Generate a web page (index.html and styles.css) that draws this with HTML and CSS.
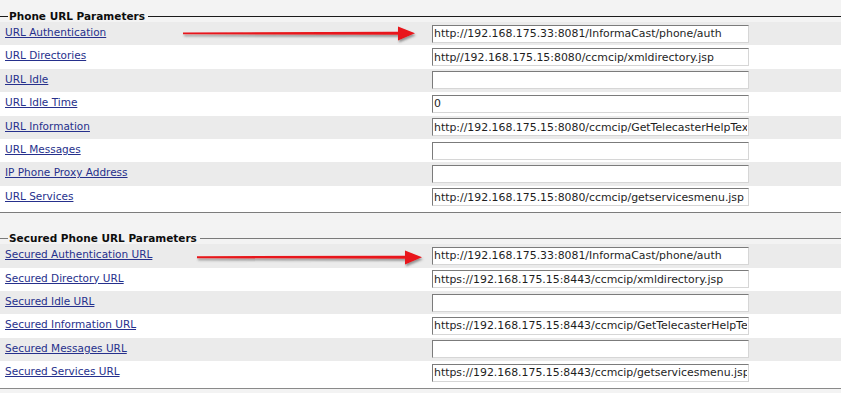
FILE: index.html
```html
<!DOCTYPE html>
<html>
<head>
<meta charset="utf-8">
<link rel="stylesheet" href="styles.css">
</head>
<body>
<div class="page">
  <section class="group first">
    <div class="legend"><span>Phone URL Parameters</span></div>
    <div class="rows">
      <div class="row"><a href="#">URL Authentication</a><input type="text" value="http://192.168.175.33:8081/InformaCast/phone/auth"></div>
      <div class="row"><a href="#">URL Directories</a><input type="text" value="http//192.168.175.15:8080/ccmcip/xmldirectory.jsp"></div>
      <div class="row"><a href="#">URL Idle</a><input type="text" value=""></div>
      <div class="row"><a href="#">URL Idle Time</a><input type="text" value="0"></div>
      <div class="row"><a href="#">URL Information</a><input type="text" value="http://192.168.175.15:8080/ccmcip/GetTelecasterHelpText.jsp"></div>
      <div class="row"><a href="#">URL Messages</a><input type="text" value=""></div>
      <div class="row"><a href="#">IP Phone Proxy Address</a><input type="text" value=""></div>
      <div class="row"><a href="#">URL Services</a><input type="text" value="http://192.168.175.15:8080/ccmcip/getservicesmenu.jsp"></div>
    </div>
  </section>
  <section class="group second">
    <div class="legend"><span>Secured Phone URL Parameters</span></div>
    <div class="rows">
      <div class="row"><a href="#">Secured Authentication URL</a><input type="text" value="http://192.168.175.33:8081/InformaCast/phone/auth"></div>
      <div class="row"><a href="#">Secured Directory URL</a><input type="text" value="https://192.168.175.15:8443/ccmcip/xmldirectory.jsp"></div>
      <div class="row"><a href="#">Secured Idle URL</a><input type="text" value=""></div>
      <div class="row"><a href="#">Secured Information URL</a><input type="text" value="https://192.168.175.15:8443/ccmcip/GetTelecasterHelpText.jsp"></div>
      <div class="row"><a href="#">Secured Messages URL</a><input type="text" value=""></div>
      <div class="row"><a href="#">Secured Services URL</a><input type="text" value="https://192.168.175.15:8443/ccmcip/getservicesmenu.jsp"></div>
    </div>
  </section>
  <svg class="arrows" width="841" height="393" viewBox="0 0 841 393">
    <defs>
      <filter id="sh" x="-10%" y="-100%" width="120%" height="400%">
        <feDropShadow dx="1" dy="2" stdDeviation="1.2" flood-color="#555" flood-opacity="0.6"/>
      </filter>
    </defs>
    <g filter="url(#sh)" fill="#e8141a">
      <polygon points="183,32.4 400,31.8 400,34.8 183,34.2"/>
      <polygon points="398,26.5 415,33.3 398,40.5"/>
      <polygon points="197,256.2 407,255.8 407,258.8 197,258.2"/>
      <polygon points="405,250.5 422,257.3 405,264.5"/>
    </g>
  </svg>
</div>
</body>
</html>
```
FILE: styles.css
```css
html, body {
  margin: 0;
  padding: 0;
}

body {
  background: #f3f3f3;
  font-family: "DejaVu Sans", Verdana, sans-serif;
}

.page {
  position: relative;
  width: 841px;
  height: 393px;
  overflow: hidden;
  padding-top: 10px;
  box-sizing: border-box;
}

.legend {
  display: flex;
  align-items: center;
  height: 12px;
  font-size: 10.5px;
  font-weight: bold;
  color: #0d0d0d;
}

.legend::before {
  content: "";
  width: 8px;
  border-top: 1px solid #1a1a1a;
}

.legend::after {
  content: "";
  flex: 1;
  border-top: 1px solid #1a1a1a;
}

.legend span {
  padding: 0 3px 0 1px;
  line-height: 12px;
}

.second {
  margin-top: 19px;
}

.second .legend::before,
.second .legend::after {
  border-top-color: #7a7a7a;
}

.rows {
  background: #fff;
  border-bottom: 1px solid #7c7c7c;
}

.first .rows {
  padding-bottom: 3px;
}

.second .rows {
  padding-bottom: 4px;
  border-bottom-color: #8a8a8a;
}

.row {
  display: grid;
  grid-template-columns: 432px 317px;
  align-items: center;
  height: 23.4px;
}

.row:nth-child(odd) {
  background: #ebebeb;
}

.row a {
  align-self: start;
  justify-self: start;
  margin-left: 5px;
  margin-top: 4px;
  font-size: 10.5px;
  line-height: 13px;
  color: #26308c;
  text-decoration: underline;
}

.row input {
  width: 317px;
  height: 18px;
  box-sizing: border-box;
  margin: 0;
  padding: 0 1px;
  border: 1px solid;
  border-color: #7b7b7b #d6d6d6 #d6d6d6 #7b7b7b;
  background: #fff;
  font-family: "DejaVu Sans", Verdana, sans-serif;
  font-size: 10.9px;
  color: #1e1e1e;
  outline: none;
}

.arrows {
  position: absolute;
  top: 0;
  left: 0;
  pointer-events: none;
}
```
